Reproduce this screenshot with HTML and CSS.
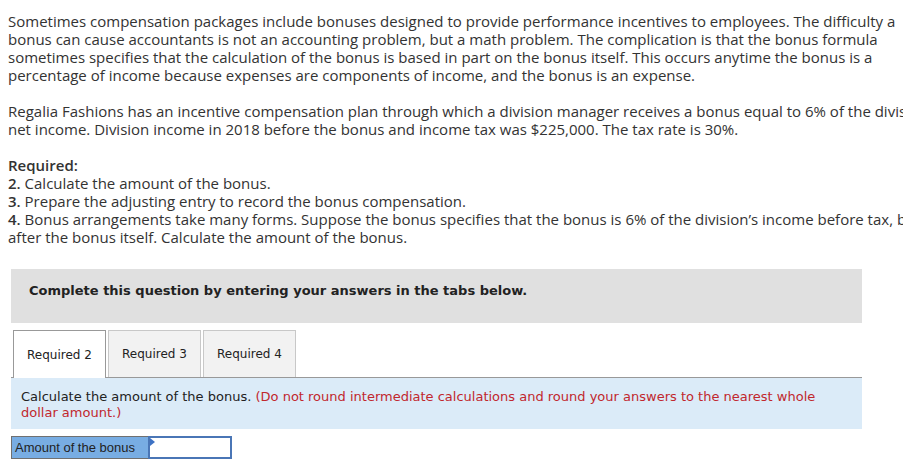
FILE: index.html
```html
<!DOCTYPE html>
<html>
<head>
<meta charset="utf-8">
<link rel="stylesheet" href="styles.css">
</head>
<body>
<div class="page">
  <div class="prompt">
    <p>Sometimes compensation packages include bonuses designed to provide performance incentives to employees. The difficulty a bonus can cause accountants is not an accounting problem, but a math problem. The complication is that the bonus formula sometimes specifies that the calculation of the bonus is based in part on the bonus itself. This occurs anytime the bonus is a percentage of income because expenses are components of income, and the bonus is an expense.</p>
    <p>Regalia Fashions has an incentive compensation plan through which a division manager receives a bonus equal to 6% of the division’s net income. Division income in 2018 before the bonus and income tax was $225,000. The tax rate is 30%.</p>
    <p><b>Required:</b><br>
    <b>2.</b> Calculate the amount of the bonus.<br>
    <b>3.</b> Prepare the adjusting entry to record the bonus compensation.<br>
    <b>4.</b> Bonus arrangements take many forms. Suppose the bonus specifies that the bonus is 6% of the division’s income before tax, but after the bonus itself. Calculate the amount of the bonus.</p>
  </div>
  <div class="question">
    <div class="banner">Complete this question by entering your answers in the tabs below.</div>
    <div class="tabs">
      <div class="tab active">Required 2</div>
      <div class="tab">Required 3</div>
      <div class="tab">Required 4</div>
    </div>
    <div class="panel">Calculate the amount of the bonus. <span class="note">(Do not round intermediate calculations and round your answers to the nearest whole dollar amount.)</span></div>
    <div class="answer">
      <div class="label">Amount of the bonus</div>
      <div class="input"><span class="flag"></span></div>
    </div>
  </div>
</div>
</body>
</html>
```
FILE: styles.css
```css
html, body {
  margin: 0;
  padding: 0;
  background: #fff;
  overflow: hidden;
}
.page {
  width: 930px;
  padding: 12px 8px 0 8px;
}
.prompt {
  font-family: "Open Sans", "Liberation Sans", sans-serif;
  font-size: 15px;
  line-height: 18px;
  color: #333;
}
.prompt p {
  margin: 0 0 18px 0;
}
.prompt b {
  font-weight: 600;
}
.question {
  width: 851px;
  margin-left: 3px;
  margin-top: 23px;
}
.banner {
  background: #e0e0e0;
  height: 54px;
  box-sizing: border-box;
  padding: 14px 18px 0;
  font-family: "DejaVu Sans", Verdana, sans-serif;
  font-weight: bold;
  font-size: 13px;
  line-height: 16px;
  color: #222;
}
.tabs {
  display: flex;
  gap: 2px;
  margin-top: 7px;
  padding-left: 2px;
  position: relative;
  z-index: 1;
}
.tab {
  width: 93px;
  height: 47px;
  box-sizing: border-box;
  border: 1px solid #c8c8c8;
  border-bottom: none;
  background: #f2f2f2;
  display: flex;
  align-items: center;
  justify-content: center;
  font-family: "DejaVu Sans", Verdana, sans-serif;
  font-size: 12px;
  color: #222;
}
.tab.active {
  background: #fff;
  border-color: #999;
  height: 48px;
  margin-bottom: -1px;
}
.panel {
  border-top: 1px solid #999;
  background: #dbebf8;
  padding: 11px 10px 8px 10px;
  font-family: "DejaVu Sans", Verdana, sans-serif;
  font-size: 13px;
  line-height: 16px;
  color: #222;
}
.note {
  color: #c1272d;
}
.answer {
  display: flex;
  margin-top: 7px;
}
.label {
  width: 137px;
  height: 23px;
  box-sizing: border-box;
  border: 1px solid #707070;
  border-right: none;
  background: #78ade3;
  font-family: "Liberation Sans", Arial, sans-serif;
  font-size: 13px;
  line-height: 21px;
  padding-left: 3px;
  color: #222;
}
.input {
  width: 84px;
  height: 23px;
  box-sizing: border-box;
  border: 2px solid #4a76b6;
  background: #fff;
  position: relative;
}
.flag {
  position: absolute;
  left: 0;
  top: 0;
  width: 0;
  height: 0;
  border-top: 4px solid transparent;
  border-bottom: 4px solid transparent;
  border-left: 5px solid #3d72c4;
}
```
